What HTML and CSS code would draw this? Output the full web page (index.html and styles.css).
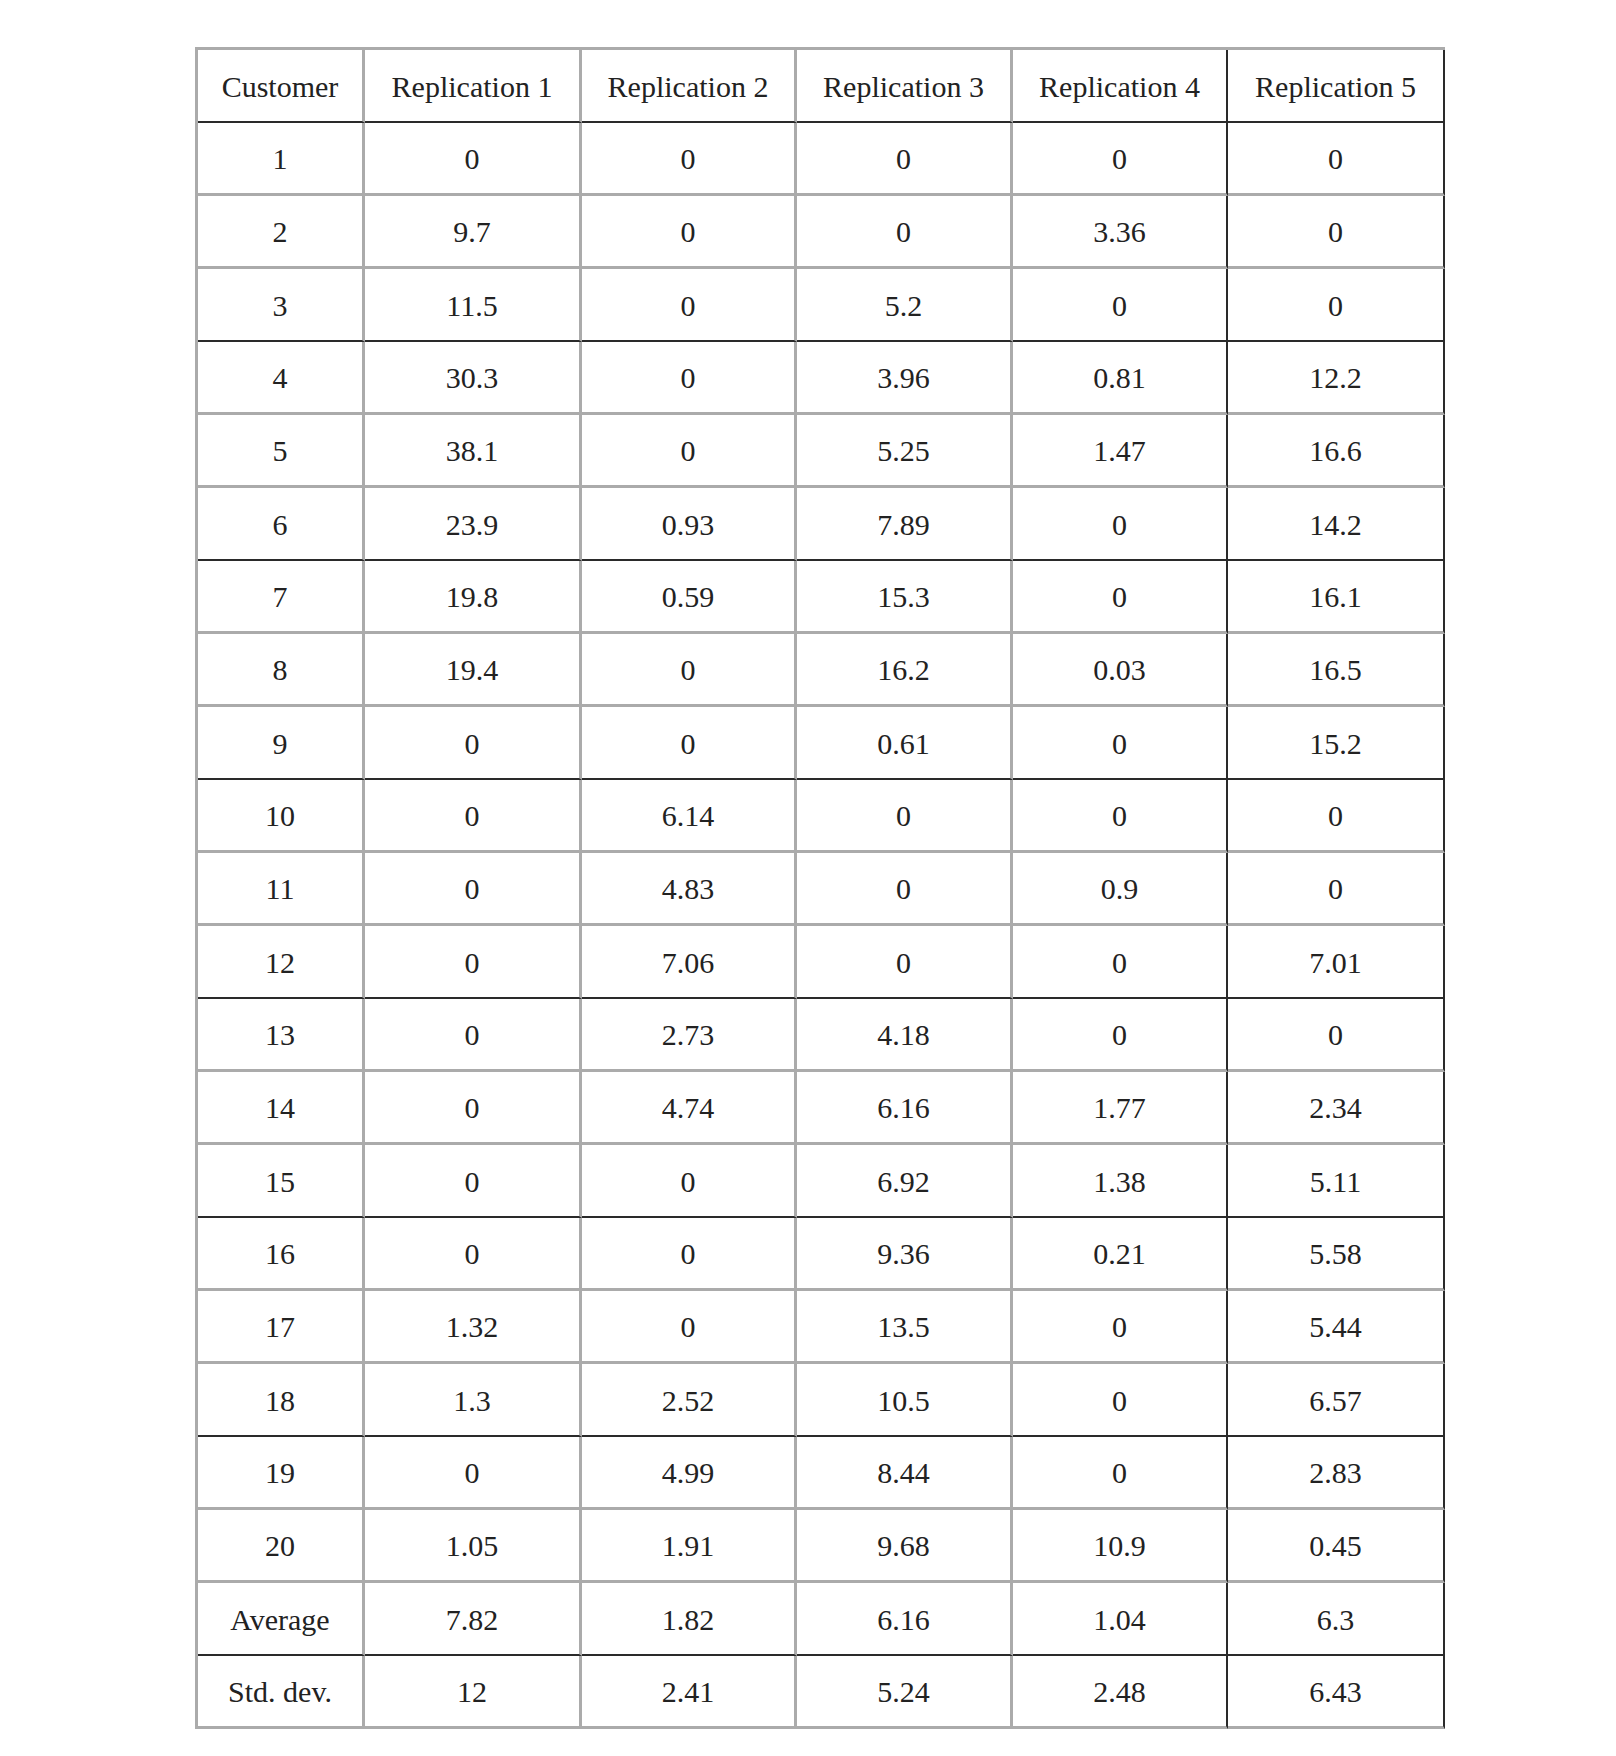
FILE: index.html
```html
<!DOCTYPE html>
<html lang="en">
<head>
<meta charset="utf-8">
<title>Replications</title>
<link rel="stylesheet" href="styles.css">
</head>
<body>
<div class="page">
<table class="data">
<colgroup>
<col class="c-cust"><col class="c-r1"><col class="c-r2"><col class="c-r3"><col class="c-r4"><col class="c-r5">
</colgroup>
<thead>
<tr class="dark"><th>Customer</th><th>Replication 1</th><th>Replication 2</th><th>Replication 3</th><th>Replication 4</th><th>Replication 5</th></tr>
</thead>
<tbody>
<tr><td>1</td><td>0</td><td>0</td><td>0</td><td>0</td><td>0</td></tr>
<tr><td>2</td><td>9.7</td><td>0</td><td>0</td><td>3.36</td><td>0</td></tr>
<tr class="dark"><td>3</td><td>11.5</td><td>0</td><td>5.2</td><td>0</td><td>0</td></tr>
<tr><td>4</td><td>30.3</td><td>0</td><td>3.96</td><td>0.81</td><td>12.2</td></tr>
<tr><td>5</td><td>38.1</td><td>0</td><td>5.25</td><td>1.47</td><td>16.6</td></tr>
<tr class="dark"><td>6</td><td>23.9</td><td>0.93</td><td>7.89</td><td>0</td><td>14.2</td></tr>
<tr><td>7</td><td>19.8</td><td>0.59</td><td>15.3</td><td>0</td><td>16.1</td></tr>
<tr><td>8</td><td>19.4</td><td>0</td><td>16.2</td><td>0.03</td><td>16.5</td></tr>
<tr class="dark"><td>9</td><td>0</td><td>0</td><td>0.61</td><td>0</td><td>15.2</td></tr>
<tr><td>10</td><td>0</td><td>6.14</td><td>0</td><td>0</td><td>0</td></tr>
<tr><td>11</td><td>0</td><td>4.83</td><td>0</td><td>0.9</td><td>0</td></tr>
<tr class="dark"><td>12</td><td>0</td><td>7.06</td><td>0</td><td>0</td><td>7.01</td></tr>
<tr><td>13</td><td>0</td><td>2.73</td><td>4.18</td><td>0</td><td>0</td></tr>
<tr><td>14</td><td>0</td><td>4.74</td><td>6.16</td><td>1.77</td><td>2.34</td></tr>
<tr class="dark"><td>15</td><td>0</td><td>0</td><td>6.92</td><td>1.38</td><td>5.11</td></tr>
<tr><td>16</td><td>0</td><td>0</td><td>9.36</td><td>0.21</td><td>5.58</td></tr>
<tr><td>17</td><td>1.32</td><td>0</td><td>13.5</td><td>0</td><td>5.44</td></tr>
<tr class="dark"><td>18</td><td>1.3</td><td>2.52</td><td>10.5</td><td>0</td><td>6.57</td></tr>
<tr><td>19</td><td>0</td><td>4.99</td><td>8.44</td><td>0</td><td>2.83</td></tr>
<tr><td>20</td><td>1.05</td><td>1.91</td><td>9.68</td><td>10.9</td><td>0.45</td></tr>
<tr class="dark"><td>Average</td><td>7.82</td><td>1.82</td><td>6.16</td><td>1.04</td><td>6.3</td></tr>
<tr><td>Std. dev.</td><td>12</td><td>2.41</td><td>5.24</td><td>2.48</td><td>6.43</td></tr>
</tbody>
</table>
</div>
</body>
</html>
```

FILE: styles.css
```css
html, body {
  margin: 0;
  padding: 0;
  background: #ffffff;
}

.page {
  padding: 47px 0 0 195px;
}

.data {
  border-collapse: separate;
  border-spacing: 0;
  table-layout: fixed;
  width: 1250px;
  border-left: 3px solid #ababab;
  border-top: 3px solid #ababab;
  font-family: "Liberation Serif", "Times New Roman", serif;
  font-size: 30px;
  color: #222222;
}

.c-cust { width: 167px; }
.c-r1 { width: 217px; }
.c-r2 { width: 215px; }
.c-r3 { width: 216px; }
.c-r4 { width: 215px; }
.c-r5 { width: 217px; }

.data tr {
  height: 73px;
}

.data th,
.data td {
  font-weight: normal;
  text-align: center;
  vertical-align: middle;
  padding: 2px 0 0 0;
  border-right: 3px solid #ababab;
  border-bottom: 3px solid #ababab;
  line-height: 1;
}

.data th:nth-child(5),
.data td:nth-child(5) {
  border-right: 2px solid #2a2a2a;
}

.data th:nth-child(6),
.data td:nth-child(6) {
  border-right: 2px solid #2a2a2a;
}

.data tr.dark th,
.data tr.dark td {
  border-bottom: 2px solid #2a2a2a;
}
```
